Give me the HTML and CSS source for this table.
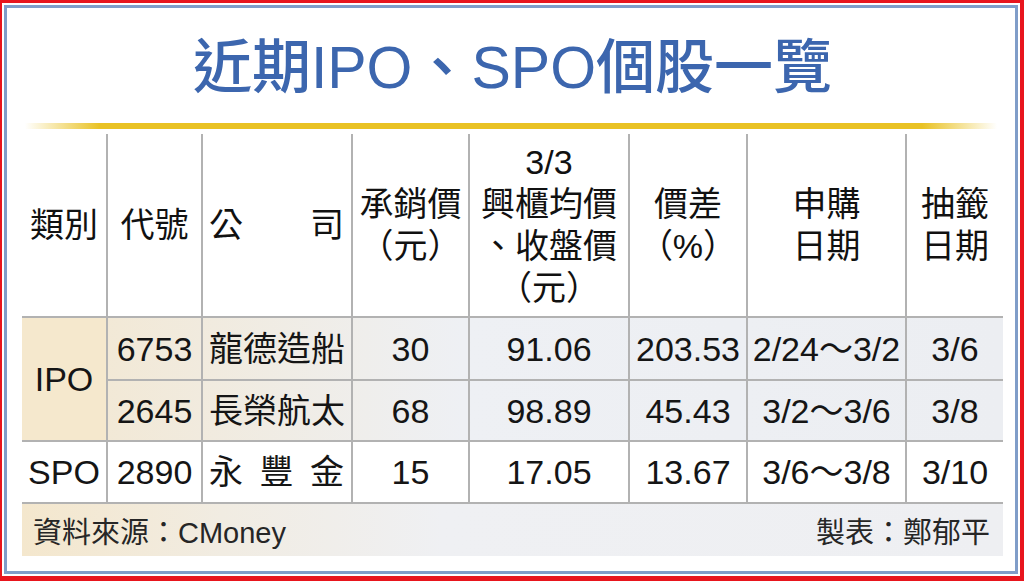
FILE: index.html
```html
<!DOCTYPE html>
<html lang="zh-Hant">
<head>
<meta charset="utf-8">
<title>近期IPO、SPO個股一覽</title>
<link rel="stylesheet" href="styles.css">
</head>
<body>
<div class="frame">
  <div class="panel">
    <h1 class="title">近期IPO、SPO個股一覽</h1>
    <div class="rule"></div>
    <table class="grid">
      <colgroup>
        <col class="c1"><col class="c2"><col class="c3"><col class="c4">
        <col class="c5"><col class="c6"><col class="c7"><col class="c8">
      </colgroup>
      <thead>
        <tr class="head">
          <th>類別</th>
          <th>代號</th>
          <th class="co"><div class="spread"><span>公</span><span>司</span></div></th>
          <th>承銷價<br>（元）</th>
          <th>3/3<br>興櫃均價<br>、收盤價<br>（元）</th>
          <th>價差<br>（%）</th>
          <th>申購<br>日期</th>
          <th>抽籤<br>日期</th>
        </tr>
      </thead>
      <tbody>
        <tr class="row shade r1">
          <td class="kind" rowspan="2">IPO</td>
          <td>6753</td>
          <td class="co"><div class="spread"><span>龍</span><span>德</span><span>造</span><span>船</span></div></td>
          <td>30</td>
          <td>91.06</td>
          <td>203.53</td>
          <td>2/24～3/2</td>
          <td>3/6</td>
        </tr>
        <tr class="row shade r2">
          <td>2645</td>
          <td class="co"><div class="spread"><span>長</span><span>榮</span><span>航</span><span>太</span></div></td>
          <td>68</td>
          <td>98.89</td>
          <td>45.43</td>
          <td>3/2～3/6</td>
          <td>3/8</td>
        </tr>
        <tr class="row r3">
          <td>SPO</td>
          <td>2890</td>
          <td class="co"><div class="spread"><span>永</span><span>豐</span><span>金</span></div></td>
          <td>15</td>
          <td>17.05</td>
          <td>13.67</td>
          <td>3/6～3/8</td>
          <td>3/10</td>
        </tr>
      </tbody>
      <tfoot>
        <tr class="foot">
          <td colspan="8">
            <div class="foot-inner">
              <span>資料來源：CMoney</span>
              <span>製表：鄭郁平</span>
            </div>
          </td>
        </tr>
      </tfoot>
    </table>
  </div>
</div>
</body>
</html>
```

FILE: styles.css
```css
html, body {
  margin: 0;
  padding: 0;
  background: #ffffff;
}

body {
  font-family: "Liberation Sans", "Noto Sans CJK TC", sans-serif;
  color: #161616;
}

.frame {
  width: 1024px;
  height: 581px;
  box-sizing: border-box;
  border-style: solid;
  border-color: #e8151d;
  border-width: 3px 4px 5px 2px;
  padding: 2px;
  background: #ffffff;
}

.panel {
  height: 100%;
  box-sizing: border-box;
  border: 3px solid #809dc9;
  padding: 0 12px 0 15px;
  display: flex;
  flex-direction: column;
}

.title {
  margin: 25px 0 0 0;
  height: 70px;
  line-height: 70px;
  font-size: 59px;
  font-weight: 500;
  text-align: center;
  color: #3c66ae;
  letter-spacing: 0;
}

.rule {
  margin: 20px 6px 0 3px;
  height: 6px;
  flex: none;
  background: linear-gradient(to right,
    rgba(233, 194, 36, 0) 0px,
    #e9c224 75px,
    #e9c224 calc(100% - 75px),
    rgba(233, 194, 36, 0) 100%);
}

.grid {
  margin-top: 5px;
  width: 981px;
  table-layout: fixed;
  border-collapse: collapse;
  border-style: hidden;
  font-size: 34px;
}

.c1 { width: 85px; }
.c2 { width: 95px; }
.c3 { width: 150px; }
.c4 { width: 117px; }
.c5 { width: 160px; }
.c6 { width: 118px; }
.c7 { width: 159px; }
.c8 { width: 97px; }

.grid th,
.grid td {
  border: 2px solid #b2b2b2;
  padding: 0;
  text-align: center;
  vertical-align: middle;
  white-space: nowrap;
  font-weight: 400;
}

.head th {
  height: 182px;
  line-height: 42px;
  color: #111111;
}

.row td {
  line-height: 40px;
  color: #151515;
}

.r1 td { height: 61px; }
.r2 td { height: 59px; }
.r3 td { height: 60px; }

.shade {
  background: linear-gradient(to right, #f3e7cf 0px, #eef0f4 440px, #eceef2 100%);
}

.shade td {
  background: transparent;
}

.grid td.kind {
  background: #f5e8cd;
}

.grid .co {
  padding: 0 7px 0 6px;
}

.spread {
  display: flex;
  justify-content: space-between;
}

.foot td {
  height: 52px;
  padding: 0 13px 0 11px;
  font-size: 29px;
  color: #262626;
  background: linear-gradient(to right, #f4e7cd 0px, #f1ece2 200px, #eff0f3 420px, #eeeff2 100%);
  text-align: left;
}

.foot-inner {
  display: flex;
  justify-content: space-between;
  align-items: center;
}
```
